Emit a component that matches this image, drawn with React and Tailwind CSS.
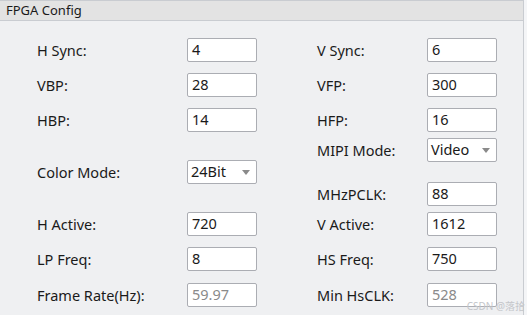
import React from "react";

const font = { fontFamily: '"Noto Sans", "Open Sans", "Noto Sans CJK SC", sans-serif' };

function Field({ label, value, disabled, combo, labelW = "w-[150px]", className = "" }) {
  return (
    <div className={`flex items-center h-[24px] ${className}`}>
      <div className={`${labelW} shrink-0 text-[14.5px] text-[#1a1a1a] leading-none`}>{label}</div>
      {combo ? (
        <div className="w-[70px] h-[24px] shrink-0 bg-white border border-[#abadb3] rounded-[2px] flex items-center justify-between pl-[3px] pr-[6px] text-[14.5px] text-[#1a1a1a]">
          <span>{value}</span>
          <svg width="8" height="5" viewBox="0 0 8 5"><path d="M0 0 L8 0 L4 5 Z" fill="#8a8a8a" /></svg>
        </div>
      ) : (
        <div className={`w-[70px] h-[24px] shrink-0 bg-white border border-[#abadb3] rounded-[2px] flex items-center pl-[4px] text-[14.5px] ${disabled ? "text-[#8a8a8a]" : "text-[#1a1a1a]"}`}>
          {value}
        </div>
      )}
    </div>
  );
}

export default function App() {
  const R = "w-[110px]";
  return (
    <div className="relative w-[527px] h-[315px] bg-[#f4f5f7] overflow-hidden" style={font}>
      <div className="w-[524px] h-[315px] bg-[#eff0f2] border-t border-r border-[#c9ccd1] flex flex-col">
        <div className="h-[20px] bg-[#e3e3e3] border-b border-[#c9ccd1] flex items-center pl-[6px] text-[13px] text-[#1a1a1a] shrink-0">
          FPGA Config
        </div>
        <div className="flex pl-[37px] pt-[17px]">
          <div className="flex flex-col w-[280px] shrink-0">
            <Field label="H Sync:" value="4" />
            <Field label="VBP:" value="28" className="mt-[11px]" />
            <Field label="HBP:" value="14" className="mt-[11px]" />
            <Field label="Color Mode:" value="24Bit" combo className="mt-[28px]" />
            <Field label="H Active:" value="720" className="mt-[28px]" />
            <Field label="LP Freq:" value="8" className="mt-[11px]" />
            <Field label="Frame Rate(Hz):" value="59.97" disabled className="mt-[12px]" />
          </div>
          <div className="flex flex-col shrink-0">
            <Field labelW={R} label="V Sync:" value="6" />
            <Field labelW={R} label="VFP:" value="300" className="mt-[11px]" />
            <Field labelW={R} label="HFP:" value="16" className="mt-[11px]" />
            <Field labelW={R} label="MIPI Mode:" value="Video" combo className="mt-[6px]" />
            <Field labelW={R} label="MHzPCLK:" value="88" className="mt-[20px]" />
            <Field labelW={R} label="V Active:" value="1612" className="mt-[6px]" />
            <Field labelW={R} label="HS Freq:" value="750" className="mt-[11px]" />
            <Field labelW={R} label="Min HsCLK:" value="528" disabled className="mt-[12px]" />
          </div>
        </div>
      </div>
      <div className="absolute right-[2px] bottom-[4px] text-[10px] leading-none text-[#c4c6ca]">CSDN @落拾</div>
    </div>
  );
}
